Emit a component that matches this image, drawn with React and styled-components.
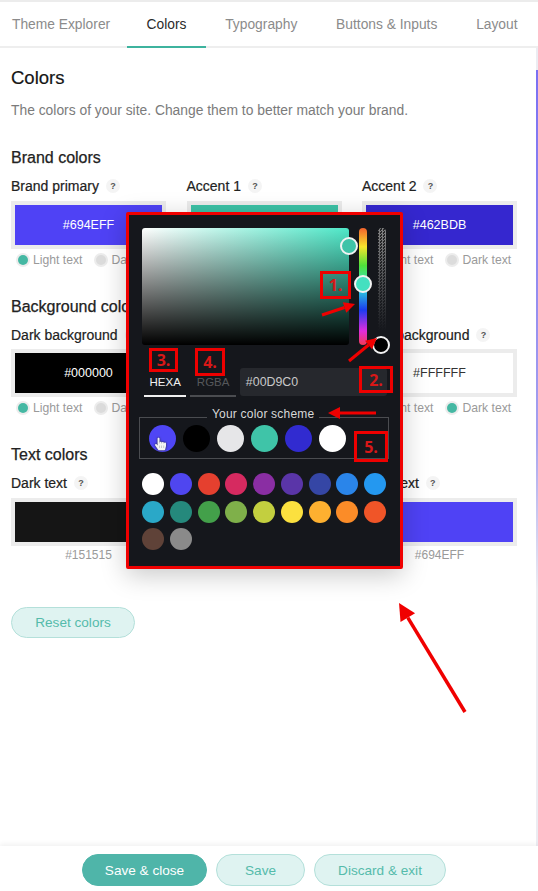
import React from "react";
import styled, { createGlobalStyle } from "styled-components";
import { FaHandPointer } from "react-icons/fa";

const GlobalStyle = createGlobalStyle`
  html, body {
    margin: 0;
    padding: 0;
    background: #fff;
    overflow: hidden;
  }
  * {
    box-sizing: border-box;
  }
`;

const Page = styled.div`
  position: relative;
  display: flex;
  flex-direction: column;
  width: 538px;
  height: 891px;
  overflow: hidden;
  background: #fff;
  color: #1c1c1c;
  font-family: "Liberation Sans", Arial, sans-serif;
`;

const Tabs = styled.nav`
  display: flex;
  flex: none;
  height: 48px;
  padding-left: 12px;
  border-top: 2px solid #ececec;
  border-bottom: 2px solid #eeeeee;
`;

const Tab = styled.div`
  display: flex;
  align-items: center;
  height: 46px;
  margin-bottom: -2px;
  padding: 0 19.4px;
  font-size: 13.8px;
  color: ${(p) => (p.$active ? "#2a2a2a" : "#8b8b8b")};
  border-bottom: 2px solid ${(p) => (p.$active ? "#3db39e" : "transparent")};
  &:first-child {
    padding: 0 17px 0 0;
  }
`;

const Content = styled.main`
  flex: 1;
  padding: 20px 21px 0 11px;
  border-right: 2px solid #ececf2;
`;

const Title = styled.h1`
  margin: 0;
  font-size: 18.5px;
  line-height: 20px;
  font-weight: 400;
  color: #151515;
  -webkit-text-stroke: 0.2px #151515;
`;

const Lead = styled.p`
  margin: 13px 0 30px;
  font-size: 13.85px;
  line-height: 18px;
  color: #7b7b7b;
`;

const Section = styled.section`
  margin-bottom: 31px;
`;

const SectionTitle = styled.h2`
  margin: 0 0 11px;
  font-size: 16px;
  line-height: 18px;
  font-weight: 400;
  color: #222;
  -webkit-text-stroke: 0.25px #222;
`;

const Columns = styled.div`
  display: grid;
  grid-template-columns: repeat(3, 155px);
  column-gap: 20.5px;
`;

const Label = styled.div`
  display: flex;
  align-items: center;
  gap: 7px;
  height: 16px;
  margin-bottom: 6.5px;
  font-size: 14px;
  white-space: nowrap;
  color: #222;
  -webkit-text-stroke: 0.2px #222;
`;

const Help = styled.span`
  display: flex;
  align-items: center;
  justify-content: center;
  width: 14px;
  height: 14px;
  border-radius: 50%;
  background: #f4f4f4;
  font-size: 9px;
  font-weight: 700;
  color: #555;
  -webkit-text-stroke: 0;
`;

const Swatch = styled.div`
  display: flex;
  align-items: center;
  justify-content: center;
  height: 48px;
  border: 4.5px solid #ececec;
  background: ${(p) => p.$color};
  color: ${(p) => (p.$dark ? "#333" : "#fff")};
  font-size: 12.5px;
`;

const Radios = styled.div`
  display: flex;
  gap: 12px;
  margin-top: 4px;
  padding-left: 5px;
`;

const Radio = styled.div`
  display: flex;
  align-items: center;
  gap: 3px;
  height: 14px;
  font-size: 12.2px;
  white-space: nowrap;
  color: #9a9a9a;
  &::before {
    content: "";
    width: 10px;
    height: 10px;
    border-radius: 50%;
    background: ${(p) => (p.$on ? "#45b8a3" : "#dcdcdc")};
    box-shadow: 0 0 0 2px #ececec;
    margin: 0 2px;
  }
`;

const Caption = styled.div`
  margin-top: 2px;
  text-align: center;
  font-size: 12px;
  line-height: 14px;
  color: #9a9a9a;
`;

const Pill = styled.button`
  display: inline-flex;
  align-items: center;
  justify-content: center;
  height: ${(p) => p.$height || 32}px;
  width: ${(p) => p.$width}px;
  padding: 0;
  border-radius: 16px;
  border: 1px solid ${(p) => (p.$solid ? "#4fb5a9" : "#b4e0da")};
  background: ${(p) => (p.$solid ? "#4fb5a9" : "#dff3f1")};
  color: ${(p) => (p.$solid ? "#fff" : "#55bbab")};
  font-family: inherit;
  font-size: 13.6px;
`;

const ResetRow = styled.div`
  margin-top: 45px;
`;

const Footer = styled.footer`
  display: flex;
  flex: none;
  justify-content: center;
  gap: 9px;
  height: 45px;
  padding: 8px 92px 0 82px;
  background: #fff;
  box-shadow: 0 -2px 5px rgba(0, 0, 0, 0.06);
`;

const Popover = styled.div`
  position: absolute;
  left: 126px;
  top: 212px;
  width: 277px;
  height: 357px;
  padding: 13px 13px 0;
  border: 3px solid #f00000;
  border-radius: 2px;
  background: #15171c;
  box-shadow: 0 6px 26px rgba(0, 0, 0, 0.22);
`;

const PickerRow = styled.div`
  display: flex;
  height: 117px;
`;

const Field = styled.div`
  width: 207px;
  border-radius: 3px;
  background: linear-gradient(to bottom, rgba(0, 0, 0, 0), #000),
    linear-gradient(to right, #fff, #4ee8c8);
`;

const Hue = styled.div`
  width: 8px;
  margin-left: 10px;
  border-radius: 4px;
  background: linear-gradient(
    to bottom,
    #f2622c 0%,
    #f5e52c 16%,
    #4fe03a 32%,
    #2fe6d8 50%,
    #1b3cf0 70%,
    #e02cdc 88%,
    #f23a55 100%
  );
`;

const Alpha = styled.div`
  width: 8px;
  margin-left: 11px;
  border-radius: 4px;
  background: linear-gradient(to bottom, rgba(21, 23, 28, 0.25), #15171c 88%),
    repeating-conic-gradient(#a8a8a8 0 25%, #2a2a2a 0 50%) 0 0 / 3px 3px;
`;

const Thumb = styled.div`
  position: absolute;
  left: ${(p) => p.$x - 9}px;
  top: ${(p) => p.$y - 9}px;
  width: 18px;
  height: 18px;
  border-radius: 50%;
  border: 2.5px solid #f2f2f2;
  background: ${(p) => p.$color};
`;

const ModeRow = styled.div`
  display: flex;
  height: 29px;
  margin-top: 23px;
  padding-left: 2px;
`;

const Mode = styled.div`
  display: flex;
  align-items: center;
  justify-content: center;
  width: ${(p) => p.$width}px;
  margin-right: 4px;
  font-size: 11.5px;
  color: ${(p) => (p.$active ? "#f2f2f2" : "#55575b")};
  border-bottom: 2px solid ${(p) => (p.$active ? "#f0f0f0" : "#4a4c50")};
`;

const HexInput = styled.div`
  display: flex;
  align-items: center;
  width: 149px;
  height: 28px;
  padding-left: 6px;
  border-radius: 3px;
  background: #26282d;
  color: #c9c9c9;
  font-size: 12.4px;
`;

const Scheme = styled.div`
  position: relative;
  display: flex;
  gap: 7px;
  width: 250px;
  height: 42px;
  margin: 20px 0 0 -3px;
  padding: 6.5px 8.5px;
  border: 1px solid #4a4c50;
`;

const SchemeTitle = styled.div`
  position: absolute;
  left: 67px;
  top: -11px;
  padding: 0 5px;
  background: #15171c;
  font-size: 12px;
  line-height: 14px;
  letter-spacing: 0.2px;
  white-space: nowrap;
  color: #d8d8d8;
`;

const Dot = styled.div`
  flex: none;
  width: ${(p) => p.$size}px;
  height: ${(p) => p.$size}px;
  border-radius: 50%;
  background: ${(p) => p.$color};
`;

const Palette = styled.div`
  display: grid;
  grid-template-columns: repeat(9, 22px);
  gap: 5.5px 5.75px;
  margin-top: 14px;
`;

const Cursor = styled(FaHandPointer)`
  position: absolute;
  left: 155px;
  top: 437px;
  width: 11px;
  height: 14px;
  color: #f4f4f4;
  filter: drop-shadow(0 0 1px #222);
`;

const Callout = styled.div`
  position: absolute;
  left: ${(p) => p.$x}px;
  top: ${(p) => p.$y}px;
  width: ${(p) => p.$w}px;
  height: ${(p) => p.$h}px;
  display: flex;
  align-items: center;
  justify-content: center;
  border: 3px solid #ee0000;
  color: #d81818;
  font-family: "Open Sans", sans-serif;
  font-size: 16px;
  font-weight: 700;
`;

const Markup = styled.svg`
  position: absolute;
  inset: 0;
  pointer-events: none;
`;

const Fade = styled.div`
  position: absolute;
  right: 0;
  top: 70px;
  width: 2px;
  height: 520px;
  background: linear-gradient(to bottom, #7a70f2, #a5a0ee 70%, #ececf2);
`;

const schemeColors = ["#4f46f5", "#000000", "#e6e6e8", "#3fc4a8", "#312bd0", "#ffffff"];

const paletteColors = [
  "#ffffff", "#4f46f0", "#e5402f", "#d62a60", "#8a2ea3", "#5a35a8", "#3546a5", "#2a85ea", "#2498f0",
  "#2aa8c8", "#25897c", "#43a04a", "#7fb04a", "#c3cf3f", "#fbe03f", "#fdb030", "#fb8c28", "#f05528",
  "#5f4238", "#8a8a8a",
];

const ColorField = ({ label, color, hex, dark, selected }) => (
  <div>
    <Label>
      {label}
      <Help>?</Help>
    </Label>
    <Swatch $color={color} $dark={dark}>{selected && hex}</Swatch>
    {selected && (
      <Radios>
        <Radio $on={selected === "light"}>Light text</Radio>
        <Radio $on={selected === "dark"}>Dark text</Radio>
      </Radios>
    )}
    {!selected && hex && <Caption>{hex}</Caption>}
  </div>
);

const Arrow = ({ x1, y1, x2, y2, head = 14, width = 3 }) => {
  const angle = Math.atan2(y2 - y1, x2 - x1);
  const wing = head * 0.5;
  const bx = x2 - head * Math.cos(angle);
  const by = y2 - head * Math.sin(angle);
  const nx = Math.sin(angle) * wing;
  const ny = Math.cos(angle) * wing;
  return (
    <g>
      <line x1={x1} y1={y1} x2={bx} y2={by} stroke="#f00000" strokeWidth={width} />
      <polygon points={`${x2},${y2} ${bx + nx},${by - ny} ${bx - nx},${by + ny}`} fill="#f00000" />
    </g>
  );
};

export default function App() {
  return (
    <Page>
      <GlobalStyle />
      <Tabs>
        <Tab>Theme Explorer</Tab>
        <Tab $active>Colors</Tab>
        <Tab>Typography</Tab>
        <Tab>Buttons &amp; Inputs</Tab>
        <Tab>Layout</Tab>
      </Tabs>

      <Content>
        <Title>Colors</Title>
        <Lead>The colors of your site. Change them to better match your brand.</Lead>

        <Section>
          <SectionTitle>Brand colors</SectionTitle>
          <Columns>
            <ColorField label="Brand primary" color="#4f42f5" hex="#694EFF" selected="light" />
            <ColorField label="Accent 1" color="#3cc2a6" />
            <ColorField label="Accent 2" color="#3527cf" hex="#462BDB" selected="light" />
          </Columns>
        </Section>

        <Section>
          <SectionTitle>Background colors</SectionTitle>
          <Columns>
            <ColorField label="Dark background" color="#000000" hex="#000000" selected="light" />
            <div />
            <ColorField label="Light background" color="#ffffff" hex="#FFFFFF" dark selected="dark" />
          </Columns>
        </Section>

        <Section>
          <SectionTitle>Text colors</SectionTitle>
          <Columns>
            <ColorField label="Dark text" color="#151515" hex="#151515" />
            <div />
            <ColorField label="Light text" color="#4f42f5" hex="#694EFF" />
          </Columns>
        </Section>

        <ResetRow>
          <Pill $width={124} $height={31}>Reset colors</Pill>
        </ResetRow>
      </Content>

      <Footer>
        <Pill $solid $width={125}>Save &amp; close</Pill>
        <Pill $width={89}>Save</Pill>
        <Pill $width={132}>Discard &amp; exit</Pill>
      </Footer>

      <Fade />

      <Popover>
        <PickerRow>
          <Field />
          <Hue />
          <Alpha />
        </PickerRow>
        <ModeRow>
          <Mode $active $width={43}>HEXA</Mode>
          <Mode $width={46}>RGBA</Mode>
          <HexInput>#00D9C0</HexInput>
        </ModeRow>
        <Scheme>
          <SchemeTitle>Your color scheme</SchemeTitle>
          {schemeColors.map((color) => (
            <Dot key={color} $size={27} $color={color} />
          ))}
        </Scheme>
        <Palette>
          {paletteColors.map((color) => (
            <Dot key={color} $size={22} $color={color} />
          ))}
        </Palette>
      </Popover>

      <Thumb $x={349} $y={246} $color="#3fc3a8" />
      <Thumb $x={363} $y={284} $color="#44e0c0" />
      <Thumb $x={381} $y={345} $color="#000000" />
      <Cursor />

      <Callout $x={320} $y={271} $w={31} $h={28}>1.</Callout>
      <Callout $x={359} $y={366} $w={34} $h={27}>2.</Callout>
      <Callout $x={149} $y={348} $w={29} $h={24}>3.</Callout>
      <Callout $x={195} $y={348} $w={30} $h={28}>4.</Callout>
      <Callout $x={354} $y={431} $w={34} $h={31}>5.</Callout>

      <Markup width="538" height="891" viewBox="0 0 538 891">
        <Arrow x1={322} y1={315} x2={355} y2={304} head={11} />
        <Arrow x1={349} y1={361} x2={377} y2={338} head={11} />
        <Arrow x1={376} y1={413} x2={328} y2={413} head={12} />
        <Arrow x1={465} y1={712} x2={399} y2={603} head={17} width={3.5} />
      </Markup>
    </Page>
  );
}
